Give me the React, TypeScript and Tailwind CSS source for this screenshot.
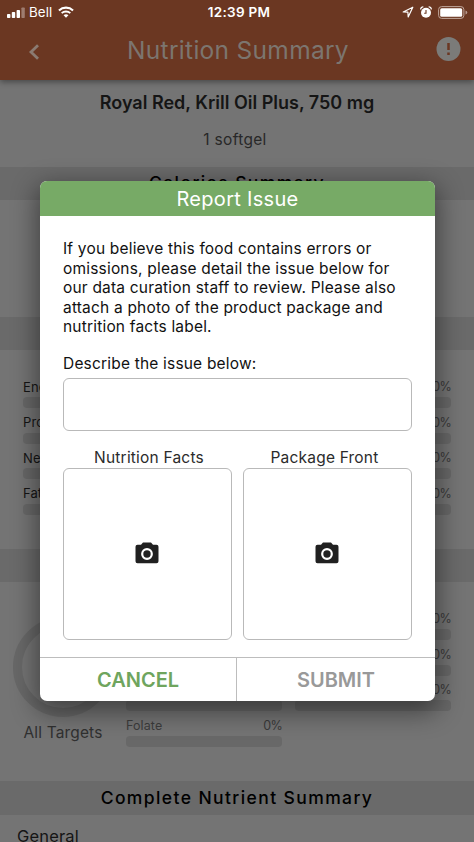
import React from "react";

function Band({ title = "", className = "" }: { title?: string; className?: string }) {
  return (
    <div
      className={`flex shrink-0 items-center justify-center bg-[#6a6a6a] text-[17.5px] font-medium tracking-[1.4px] text-black ${className}`}
    >
      {title}
    </div>
  );
}

function Meter({ label, small = false }: { label: string; small?: boolean }) {
  return (
    <div className="h-[35.5px]">
      <div
        className={`flex h-[17px] items-center justify-between ${
          small ? "text-[12.5px] tracking-[0.1px] text-[#3c3c3c]" : "text-[13px] tracking-[0.1px] text-[#151515]"
        }`}
      >
        <span>{label}</span>
        <span className="text-[12.5px] tracking-[-0.7px] text-[#3a3a3a]">0%</span>
      </div>
      <div className="mt-px h-[11px] rounded-[4px] bg-[#686868]" />
    </div>
  );
}

function StatusBar() {
  return (
    <div className="flex h-6 items-center justify-between pr-[6px] pl-[7px] text-white">
      <div className="flex w-[160px] items-center">
        <svg width="18" height="11" viewBox="0 0 18 11" fill="currentColor">
          <rect x="0" y="7" width="3.4" height="4" rx="0.8" />
          <rect x="4.8" y="5" width="3.4" height="6" rx="0.8" />
          <rect x="9.6" y="3" width="3.4" height="8" rx="0.8" />
          <rect x="14.4" y="0.5" width="3.4" height="10.5" rx="0.8" opacity="0.35" />
        </svg>
        <span className="ml-[4px] pt-[1px] text-[13.3px] tracking-[0.1px]">Bell</span>
        <svg className="ml-[6px]" width="16" height="12" viewBox="0 0 17 12" fill="none" stroke="currentColor">
          <path d="M1 4.3C5.2 0.4 11.8 0.4 16 4.3" strokeWidth="2.2" />
          <path d="M3.9 7.2C6.5 4.8 10.5 4.8 13.1 7.2" strokeWidth="2" />
          <path d="M8.5 12L5.9 9.4Q8.5 7.3 11.1 9.4Z" fill="currentColor" stroke="none" />
        </svg>
      </div>
      <span className="ml-[3px] text-[13.5px] font-semibold tracking-[0.3px]">12:39 PM</span>
      <div className="flex w-[160px] items-center justify-end">
        <svg width="12" height="12" viewBox="0 0 12 12" fill="none" stroke="currentColor" strokeWidth="1.2" strokeLinejoin="round">
          <path d="M1.2 6L10.8 1.2L6.2 10.9L5.9 6.2Z" />
        </svg>
        <svg className="ml-[6px]" width="12" height="13" viewBox="0 0 12 13">
          <circle cx="6" cy="6.8" r="5" fill="currentColor" />
          <path d="M0.7 2.9Q1 1 2.9 0.8M11.3 2.9Q11 1 9.1 0.8" fill="none" stroke="currentColor" strokeWidth="1.3" strokeLinecap="round" />
          <path d="M6 4V7.2H4.2" fill="none" stroke="#6b3722" strokeWidth="1.1" />
        </svg>
        <svg className="ml-[6px]" width="30" height="13" viewBox="0 0 30 13">
          <rect x="0.6" y="0.6" width="25.3" height="11.8" rx="3" fill="none" stroke="#c0a69b" />
          <rect x="2.2" y="2.2" width="22" height="8.6" rx="1.5" fill="white" />
          <path d="M27.5 4.5Q29.3 5 29.3 6.5T27.5 8.5Z" fill="#b69a90" />
        </svg>
      </div>
    </div>
  );
}

function Header() {
  return (
    <header className="relative h-20 shrink-0 bg-[#6b3722] shadow-[0_2px_6px_rgba(0,0,0,0.4)]">
      <StatusBar />
      <div className="flex h-[51px] items-center justify-between pr-[13px] pl-[28px] text-[#7c756f]">
        <svg className="mt-[4px]" width="12" height="16" viewBox="0 0 12 16" fill="none" stroke="#8b7b72" strokeWidth="2.8">
          <path d="M10 1.2L3 8L10 14.8" />
        </svg>
        <h1 className="pt-[1px] text-[24.5px] tracking-[0.3px] whitespace-nowrap">Nutrition Summary</h1>
        <svg width="25" height="25" viewBox="0 0 25 25">
          <circle cx="12.5" cy="12" r="12" fill="#7b7b79" />
          <path d="M12.5 6V13M12.5 15.4V18" stroke="#6b3722" strokeWidth="2.5" />
        </svg>
      </div>
    </header>
  );
}

function PhotoPicker({ label, labelClass }: { label: string; labelClass: string }) {
  return (
    <div className="flex w-[169px] flex-col">
      <div
        className={`flex h-[20px] items-center justify-center text-[15.5px] tracking-[0.2px] whitespace-nowrap text-[#2b2b2b] ${labelClass}`}
      >
        {label}
      </div>
      <button className="flex h-[172px] items-center justify-center rounded-[6px] border border-[#b9b9b9] pr-[2px] pb-[2px]">
        <svg width="24" height="22" viewBox="0 0 24 22" fill="#202020">
          <path d="M8 0.6H16L18 2.8H21.5Q23.5 2.8 23.5 4.8V19.2Q23.5 21.2 21.5 21.2H2.5Q0.5 21.2 0.5 19.2V4.8Q0.5 2.8 2.5 2.8H6Z" />
          <circle cx="12" cy="12" r="4.8" stroke="white" strokeWidth="2.2" />
        </svg>
      </button>
    </div>
  );
}

function ReportDialog() {
  return (
    <section
      role="dialog"
      className="absolute top-[181px] left-[40px] flex h-[520px] w-[395px] flex-col overflow-hidden rounded-[7px] bg-white shadow-[0_8px_26px_3px_rgba(0,0,0,0.45)]"
    >
      <h2 className="flex h-[35px] shrink-0 items-center justify-center bg-[#77aa66] text-[20px] tracking-[0.3px] text-white">
        Report Issue
      </h2>
      <div className="flex h-[441px] shrink-0 flex-col px-[23px] pt-[23px] text-[#111]">
        <p className="text-[15.5px] leading-[19.5px] tracking-[0.19px] whitespace-nowrap">
          If you believe this food contains errors or
          <br />
          omissions, please detail the issue below for
          <br />
          our data curation staff to review. Please also
          <br />
          attach a photo of the product package and
          <br />
          nutrition facts label.
        </p>
        <label className="mt-[17px] flex flex-col text-[15.5px] leading-[20px] tracking-[0.19px] whitespace-nowrap">
          Describe the issue below:
          <textarea className="mt-[4px] h-[53px] w-[349px] resize-none rounded-[6px] border border-[#b9b9b9] outline-none" />
        </label>
        <div className="mt-[17px] flex justify-between">
          <PhotoPicker label="Nutrition Facts" labelClass="pl-[3px]" />
          <PhotoPicker label="Package Front" labelClass="pr-[6px]" />
        </div>
      </div>
      <div className="flex grow border-t border-[#bdbdbd] text-[20px] font-semibold">
        <button className="w-[197px] border-r border-[#bdbdbd] text-[#6fa55e]">CANCEL</button>
        <button className="grow text-[#999]">SUBMIT</button>
      </div>
    </section>
  );
}

export default function App() {
  return (
    <main className="relative flex h-[842px] w-[474px] flex-col overflow-hidden bg-[#747474] font-['Inter','Liberation_Sans',sans-serif]">
      <Header />
      <div className="flex h-[87px] shrink-0 flex-col items-center pt-[10px]">
        <div className="flex h-[24px] items-center text-[18px] font-semibold whitespace-nowrap text-[#151515]">
          Royal Red, Krill Oil Plus, 750 mg
        </div>
        <div className="mt-[14px] mr-[4px] flex h-[24px] items-center text-[15.5px] tracking-[0.3px] text-[#282828]">1 softgel</div>
      </div>
      <Band title="Calories Summary" className="h-[33px] pb-[1px]" />
      <div className="h-[117px] shrink-0" />
      <Band className="h-[33px]" />
      <div className="h-[199px] shrink-0 pt-[29px] pr-[23px] pl-[23px]">
        <Meter label="Energy" />
        <Meter label="Protein" />
        <Meter label="Net Carbs" />
        <Meter label="Fat" />
      </div>
      <Band className="h-[33px]" />
      <div className="flex h-[199px] shrink-0 pr-[23px] pl-[13px]">
        <div className="flex w-[100px] flex-col items-center pt-[35px]">
          <div className="h-[100px] w-[100px] shrink-0 rounded-full border-[9px] border-[#686868]" />
          <div className="mt-[6px] text-[15.5px] leading-[20px] tracking-[0.15px] whitespace-nowrap text-[#303030]">All Targets</div>
        </div>
        <div className="ml-[13px] w-[156px] pt-[29px]">
          <Meter label="Vitamin A" small />
          <Meter label="Vitamin C" small />
          <Meter label="Iron" small />
          <Meter label="Folate" small />
        </div>
        <div className="ml-[13px] w-[156px] pt-[29px]">
          <Meter label="Calcium" small />
          <Meter label="B12" small />
          <Meter label="Potassium" small />
        </div>
      </div>
      <Band title="Complete Nutrient Summary" className="h-[34px] pt-[1px]" />
      <div className="pt-[9px] pl-[17px] text-[16.5px] leading-[24px] tracking-[0.15px] text-[#151515]">General</div>
      <ReportDialog />
    </main>
  );
}
